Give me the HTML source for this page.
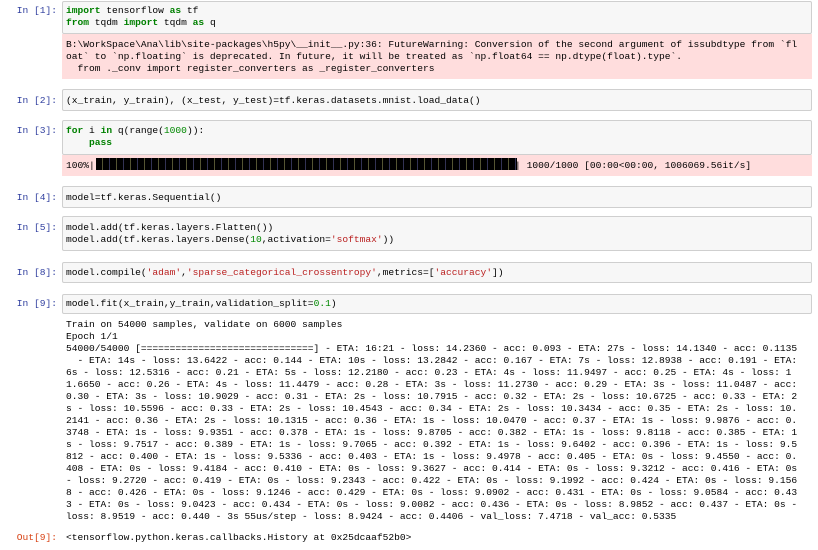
<!DOCTYPE html>
<html><head><meta charset="utf-8"><style>
body{margin:0;width:818px;height:550px;background:#fff;overflow:hidden;position:relative;font-family:"Liberation Mono",monospace;font-size:9.6px;line-height:12px;color:#000}
.p{position:absolute;left:0;width:57px;text-align:right;color:#303F9F;white-space:pre}
.o{color:#D84315}
.in{position:absolute;left:62px;width:748px;background:#f7f7f7;border:1px solid #cfcfcf;border-radius:2px}
.t{position:absolute;left:66px;white-space:pre}
.err{position:absolute;left:62px;width:750px;background:#fdd}
.k{color:#008000;font-weight:bold}
.s{color:#BA2121}
.n{color:#080}
.bar{position:absolute;left:96px;top:158px;width:421px;height:12px;background:repeating-linear-gradient(90deg,#000 0 6px,#553 6px 7px,#000 7px 13px,#335 13px 14px)}
</style></head><body>
<div class="in" style="top:1px;height:31px"></div>
<div class="p" style="top:5px">In [1]:</div>
<div class="t" style="top:5px"><span class="k">import</span> tensorflow <span class="k">as</span> tf
<span class="k">from</span> tqdm <span class="k">import</span> tqdm <span class="k">as</span> q</div>
<div class="err" style="top:34px;height:45px"></div>
<div class="t" style="top:39px">B:\WorkSpace\Ana\lib\site-packages\h5py\__init__.py:36: FutureWarning: Conversion of the second argument of issubdtype from `fl
oat` to `np.floating` is deprecated. In future, it will be treated as `np.float64 == np.dtype(float).type`.
  from ._conv import register_converters as _register_converters</div>

<div class="in" style="top:89px;height:20px"></div>
<div class="p" style="top:95px">In [2]:</div>
<div class="t" style="top:95px">(x_train, y_train), (x_test, y_test)=tf.keras.datasets.mnist.load_data()</div>

<div class="in" style="top:120px;height:33px"></div>
<div class="p" style="top:125px">In [3]:</div>
<div class="t" style="top:125px"><span class="k">for</span> i <span class="k">in</span> q(range(<span class="n">1000</span>)):
    <span class="k">pass</span></div>
<div class="err" style="top:155px;height:21px"></div>
<div class="t" style="top:160px">100%|                                                                         | 1000/1000 [00:00&lt;00:00, 1006069.56it/s]</div>
<div class="bar"></div>

<div class="in" style="top:186px;height:20px"></div>
<div class="p" style="top:192px">In [4]:</div>
<div class="t" style="top:192px">model=tf.keras.Sequential()</div>

<div class="in" style="top:216px;height:33px"></div>
<div class="p" style="top:222px">In [5]:</div>
<div class="t" style="top:222px">model.add(tf.keras.layers.Flatten())
model.add(tf.keras.layers.Dense(<span class="n">10</span>,activation=<span class="s">'softmax'</span>))</div>

<div class="in" style="top:262px;height:19px"></div>
<div class="p" style="top:267px">In [8]:</div>
<div class="t" style="top:267px">model.compile(<span class="s">'adam'</span>,<span class="s">'sparse_categorical_crossentropy'</span>,metrics=[<span class="s">'accuracy'</span>])</div>

<div class="in" style="top:294px;height:18px"></div>
<div class="p" style="top:298px">In [9]:</div>
<div class="t" style="top:298px">model.fit(x_train,y_train,validation_split=<span class="n">0.1</span>)</div>

<div class="t" style="top:319px">Train on 54000 samples, validate on 6000 samples
Epoch 1/1
54000/54000 [==============================] - ETA: 16:21 - loss: 14.2360 - acc: 0.093 - ETA: 27s - loss: 14.1340 - acc: 0.1135
  - ETA: 14s - loss: 13.6422 - acc: 0.144 - ETA: 10s - loss: 13.2842 - acc: 0.167 - ETA: 7s - loss: 12.8938 - acc: 0.191 - ETA:
6s - loss: 12.5316 - acc: 0.21 - ETA: 5s - loss: 12.2180 - acc: 0.23 - ETA: 4s - loss: 11.9497 - acc: 0.25 - ETA: 4s - loss: 1
1.6650 - acc: 0.26 - ETA: 4s - loss: 11.4479 - acc: 0.28 - ETA: 3s - loss: 11.2730 - acc: 0.29 - ETA: 3s - loss: 11.0487 - acc:
0.30 - ETA: 3s - loss: 10.9029 - acc: 0.31 - ETA: 2s - loss: 10.7915 - acc: 0.32 - ETA: 2s - loss: 10.6725 - acc: 0.33 - ETA: 2
s - loss: 10.5596 - acc: 0.33 - ETA: 2s - loss: 10.4543 - acc: 0.34 - ETA: 2s - loss: 10.3434 - acc: 0.35 - ETA: 2s - loss: 10.
2141 - acc: 0.36 - ETA: 2s - loss: 10.1315 - acc: 0.36 - ETA: 1s - loss: 10.0470 - acc: 0.37 - ETA: 1s - loss: 9.9876 - acc: 0.
3748 - ETA: 1s - loss: 9.9351 - acc: 0.378 - ETA: 1s - loss: 9.8705 - acc: 0.382 - ETA: 1s - loss: 9.8118 - acc: 0.385 - ETA: 1
s - loss: 9.7517 - acc: 0.389 - ETA: 1s - loss: 9.7065 - acc: 0.392 - ETA: 1s - loss: 9.6402 - acc: 0.396 - ETA: 1s - loss: 9.5
812 - acc: 0.400 - ETA: 1s - loss: 9.5336 - acc: 0.403 - ETA: 1s - loss: 9.4978 - acc: 0.405 - ETA: 0s - loss: 9.4550 - acc: 0.
408 - ETA: 0s - loss: 9.4184 - acc: 0.410 - ETA: 0s - loss: 9.3627 - acc: 0.414 - ETA: 0s - loss: 9.3212 - acc: 0.416 - ETA: 0s
- loss: 9.2720 - acc: 0.419 - ETA: 0s - loss: 9.2343 - acc: 0.422 - ETA: 0s - loss: 9.1992 - acc: 0.424 - ETA: 0s - loss: 9.156
8 - acc: 0.426 - ETA: 0s - loss: 9.1246 - acc: 0.429 - ETA: 0s - loss: 9.0902 - acc: 0.431 - ETA: 0s - loss: 9.0584 - acc: 0.43
3 - ETA: 0s - loss: 9.0423 - acc: 0.434 - ETA: 0s - loss: 9.0082 - acc: 0.436 - ETA: 0s - loss: 8.9852 - acc: 0.437 - ETA: 0s -
loss: 8.9519 - acc: 0.440 - 3s 55us/step - loss: 8.9424 - acc: 0.4406 - val_loss: 7.4718 - val_acc: 0.5335</div>

<div class="p o" style="top:532px">Out[9]:</div>
<div class="t" style="top:532px">&lt;tensorflow.python.keras.callbacks.History at 0x25dcaaf52b0&gt;</div>
</body></html>
